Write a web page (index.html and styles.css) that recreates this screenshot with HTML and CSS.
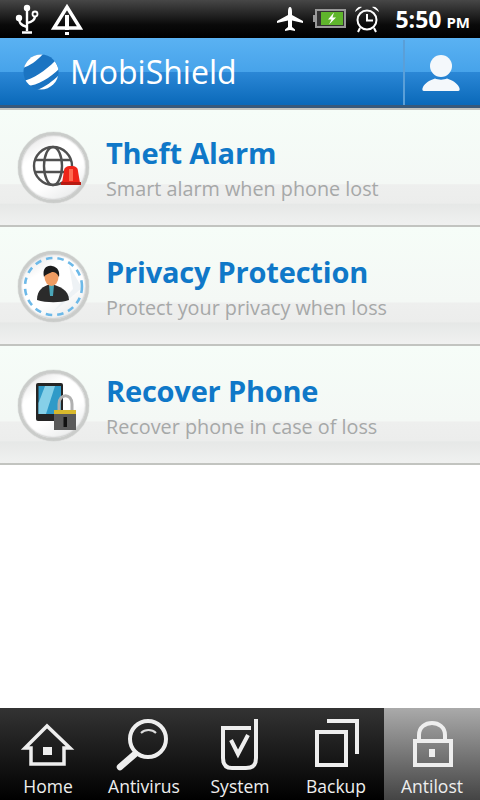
FILE: index.html
```html
<!DOCTYPE html>
<html lang="en">
<head>
    <meta charset="UTF-8">
    <meta name="viewport" content="width=device-width, initial-scale=1.0">
    <title>MobiShield</title>
    <link rel="stylesheet" href="styles.css">
</head>
<body>
<div class="phone">

    <div class="status-bar">
        <svg class="st-usb" viewBox="0 0 24 30" width="24" height="30">
            <g fill="none" stroke="#fff" stroke-width="2.400">
                <path d="M12 5V27M7 28.500H17"/>
                <path d="M12 23C5 21 4 18 4 14"/>
                <path d="M12 19C18 18 20 16 20 12"/>
            </g>
            <circle cx="12" cy="4" r="3.200" fill="#fff"/>
            <circle cx="4" cy="14" r="3.200" fill="#fff"/>
            <circle cx="20" cy="10" r="2.500" fill="none" stroke="#fff" stroke-width="1.800"/>
        </svg>
        <svg class="st-warn" viewBox="0 0 32 32" width="32" height="32">
            <path d="M16 4L29 25H3Z" fill="none" stroke="#fff" stroke-width="3.400"/>
            <rect x="14" y="12" width="4" height="15" fill="#fff"/>
            <rect x="14" y="29" width="4" height="3" fill="#fff"/>
        </svg>
        <div class="status-right">
            <svg class="st-plane" viewBox="0 0 28 26" width="28" height="26">
                <path d="M14 1C15.500 1 16 3 16 6V9L27 15V17L16 14.500V21L19 23.500V25L14 24L9 25V23.500L12 21V14.500L1 17V15L12 9V6C12 3 12.500 1 14 1Z" fill="#fff"/>
            </svg>
            <svg class="st-batt" viewBox="0 0 34 20" width="34" height="20">
                <rect x="4" y="1" width="29" height="17" fill="#333" stroke="#999" stroke-width="2"/>
                <rect x="1" y="6" width="3" height="7" fill="#999"/>
                <rect x="9" y="3" width="22" height="13" fill="#5fb52c"/>
                <path d="M22 3.500L16 10.500H19.500L17 15.500L24 8.500H20.500Z" fill="#fff"/>
            </svg>
            <svg class="st-alarm" viewBox="0 0 26 28" width="26" height="28">
                <circle cx="13" cy="15" r="9.500" fill="none" stroke="#fff" stroke-width="2"/>
                <path d="M13 9V15.500H19" fill="none" stroke="#fff" stroke-width="2"/>
                <path d="M1 7C2 3 5 1 8 2ZM25 7C24 3 21 1 18 2Z" fill="#fff"/>
                <path d="M6 23L4 27M20 23L22 27" stroke="#fff" stroke-width="2"/>
            </svg>
            <div class="clock">5:50<span class="ampm">PM</span></div>
        </div>
    </div>

    <header class="title-bar">
        <div class="brand">
            <svg class="logo" viewBox="0 0 36 36" width="36" height="36">
                <defs>
                    <clipPath id="ball"><circle cx="18" cy="18" r="17.500"/></clipPath>
                </defs>
                <circle cx="18" cy="18" r="17.500" fill="#1b74c2"/>
                <g clip-path="url(#ball)" fill="#fff">
                    <path d="M0 14C6 12 14 7 20 0H6L0 8Z"/>
                    <path d="M0 27C10 25 22 17 32 7L36 15C28 23 14 32 4 32Z"/>
                    <path d="M14 36C22 33 30 27 36 21V30L26 37Z"/>
                </g>
            </svg>
            <h1>MobiShield</h1>
        </div>
        <div class="account">
            <svg viewBox="0 0 38 36" width="38" height="36">
                <circle cx="19" cy="11" r="11" fill="#f4f8fb"/>
                <path d="M2 36C0 36 0 34 1 32C3 28 8 25 13 23.500C16 25 22 25 25 23.500C30 25 35 28 37 32C38 34 38 36 36 36Z" fill="#f4f8fb"/>
            </svg>
        </div>
    </header>

    <main class="menu">
        <div class="menu-row">
            <div class="badge">
                <svg viewBox="0 0 65 65" width="65" height="65">
                    <g fill="none" stroke="#505050" stroke-width="2.400">
                        <circle cx="32" cy="31" r="19"/>
                        <ellipse cx="32" cy="31" rx="9" ry="19"/>
                        <path d="M14 25H50M14 37H50"/>
                    </g>
                    <path d="M43 36C43 33 45 31 50 31C55 31 57 33 57 36L59 48H41Z" fill="#ee2418"/>
                    <rect x="40" y="47" width="20" height="3" fill="#b81a12"/>
                    <rect x="48" y="34" width="4" height="12" fill="#ff6a50"/>
                </svg>
            </div>
            <div class="row-text">
                <div class="row-title">Theft Alarm</div>
                <div class="row-sub">Smart alarm when phone lost</div>
            </div>
        </div>
        <div class="menu-row">
            <div class="badge">
                <svg viewBox="0 0 65 65" width="65" height="65">
                    <path d="M48 11L61 34L30 60L52 35Z" fill="#eef2f5"/>
                    <circle cx="32.500" cy="32.500" r="28.500" fill="none" stroke="#6db9e8" stroke-width="2.600" stroke-dasharray="6.500 5"/>
                    <path d="M16 46C16 36 22 32 30 30C38 32 48 36 48 46C40 49 25 49 16 46Z" fill="#2b2b2b"/>
                    <path d="M28 31H33L32 42H29Z" fill="#4aa6b8"/>
                    <ellipse cx="30.500" cy="23" rx="7" ry="9" fill="#ef9c62"/>
                    <path d="M23 23C21 14 26 11 31 12C37 13 39 18 38 23C36 19 34 18 31 18C27 20 25 20 23 23Z" fill="#1c1c1c"/>
                </svg>
            </div>
            <div class="row-text">
                <div class="row-title">Privacy Protection</div>
                <div class="row-sub">Protect your privacy when loss</div>
            </div>
        </div>
        <div class="menu-row">
            <div class="badge">
                <svg viewBox="0 0 65 65" width="65" height="65">
                    <rect x="15" y="10" width="27" height="38" rx="2" fill="#252525"/>
                    <rect x="17.500" y="13" width="22.500" height="28" fill="#2f9ac8"/>
                    <path d="M24 13H34L25 41H17.500V30Z" fill="#86d0e8"/>
                    <path d="M38 38V31C38 20 51 20 51 31V38" fill="none" stroke="#b0b0b0" stroke-width="3"/>
                    <rect x="33" y="37" width="22" height="20" fill="#5a5a5a"/>
                    <rect x="33" y="37" width="22" height="4" fill="#d9b92c"/>
                    <rect x="42.500" y="44" width="3.500" height="10" fill="#111"/>
                </svg>
            </div>
            <div class="row-text">
                <div class="row-title">Recover Phone</div>
                <div class="row-sub">Recover phone in case of loss</div>
            </div>
        </div>
    </main>

    <nav class="tabs">
        <div class="tab">
            <svg viewBox="0 0 96 54" width="96" height="54">
                <path d="M25 30L47 8L70 30H64V46H31V30Z" fill="none" stroke="#eee" stroke-width="3.500"/>
                <rect x="43" y="29" width="9" height="8" fill="#eee"/>
            </svg>
            <span>Home</span>
        </div>
        <div class="tab">
            <svg viewBox="0 0 96 54" width="96" height="54">
                <circle cx="52" cy="21" r="18" fill="none" stroke="#eee" stroke-width="4"/>
                <path d="M39 36L24 49" stroke="#eee" stroke-width="6.500" stroke-linecap="round"/>
                <path d="M45 15C49 11 56 11 60 15" fill="none" stroke="#ddd" stroke-width="2"/>
            </svg>
            <span>Antivirus</span>
        </div>
        <div class="tab">
            <svg viewBox="0 0 96 54" width="96" height="54">
                <path d="M59 10H31V40C31 47 34 50 40 50H54C61 50 64 47 64 40V1" fill="none" stroke="#eee" stroke-width="4"/>
                <path d="M39 22L46 36L56 17" fill="none" stroke="#eee" stroke-width="4"/>
            </svg>
            <span>System</span>
        </div>
        <div class="tab">
            <svg viewBox="0 0 96 54" width="96" height="54">
                <rect x="29" y="14" width="29" height="33" fill="none" stroke="#eee" stroke-width="4"/>
                <path d="M39 3H69V36" fill="none" stroke="#eee" stroke-width="4"/>
            </svg>
            <span>Backup</span>
        </div>
        <div class="tab active">
            <svg viewBox="0 0 96 54" width="96" height="54">
                <rect x="31" y="23" width="36" height="24" fill="none" stroke="#eee" stroke-width="4"/>
                <path d="M35 22V17C35 1 61 1 61 17V22" fill="none" stroke="#eee" stroke-width="4"/>
                <rect x="45" y="31" width="6" height="8" fill="#eee"/>
            </svg>
            <span>Antilost</span>
        </div>
    </nav>

</div>
</body>
</html>
```

FILE: styles.css
```css
* {
    box-sizing: border-box;
}

html, body {
    height: 100%;
}

body {
    margin: 0;
    background: #fff;
    font-family: "Open Sans", "Noto Sans", sans-serif;
    overflow: hidden;
}

.phone {
    height: 800px;
    display: flex;
    flex-direction: column;
}

/* status bar */
.status-bar {
    height: 38px;
    flex: none;
    display: flex;
    align-items: center;
    padding-left: 15px;
    background: linear-gradient(#474747, #0a0a0a 65%, #000);
}

.st-warn {
    margin-left: 12px;
}

.status-right {
    margin-left: auto;
    display: flex;
    align-items: center;
    padding-right: 10px;
}

.st-batt {
    margin-left: 8px;
}

.st-alarm {
    margin-left: 8px;
}

.clock {
    margin-left: 15px;
    color: #fff;
    font-size: 23px;
    font-weight: 700;
    white-space: nowrap;
}

.ampm {
    margin-left: 5px;
    font-size: 15px;
}

/* title bar */
.title-bar {
    height: 70px;
    flex: none;
    display: flex;
    border-bottom: 3px solid #38597a;
    background: linear-gradient(#5ab2f3, #47a3ea 50%, #2b87d6 51%, #0a69b9);
}

.logo {
    filter: blur(0.4px);
}

.brand {
    flex: 1;
    display: flex;
    align-items: center;
    gap: 11px;
    padding-left: 23px;
}

h1 {
    margin: 0;
    color: #fff;
    font-size: 32px;
    font-weight: 400;
}

.account {
    width: 77px;
    display: flex;
    align-items: center;
    justify-content: center;
    padding-right: 3px;
    border-left: 2px solid #5a9fd8;
    margin-top: 2px;
}

.account svg {
    filter: blur(0.4px);
}

/* menu rows */
.menu {
    flex: 1;
    background: #fff;
}

.menu-row {
    height: 119px;
    display: flex;
    align-items: center;
    padding: 2px 0 0 18px;
    border-bottom: 2px solid #c2c4c0;
    background: linear-gradient(#f6fdf8, #f4f8f5 64%, #eeefee 65%, #ecedec 81%, #e6e8e7 82%, #f0f1f0);
}

.menu-row:first-child {
    padding-top: 0;
    border-top: 2px solid #c2c4c0;
}

.badge {
    width: 71px;
    height: 71px;
    flex: none;
    display: flex;
    align-items: center;
    justify-content: center;
    border-radius: 50%;
    border: 3px solid #caccca;
    background: linear-gradient(150deg, #dedede, #fff 30%, #fff 62%, #e2e4e4);
    box-shadow: inset 0 0 2px #999, 0 0 1px #999;
}

.badge svg {
    filter: blur(0.5px);
}

.row-text {
    margin-left: 17px;
    padding-top: 5px;
}

.row-title {
    color: #0f78c8;
    font-size: 29px;
    font-weight: 700;
    letter-spacing: -0.2px;
    line-height: 38px;
}

.row-sub {
    color: #a6a8a8;
    font-size: 19.800px;
    line-height: 34px;
}

/* bottom tabs */
.tabs {
    height: 92px;
    flex: none;
    display: flex;
    background: linear-gradient(#333, #000);
}

.tab {
    flex: 1;
    display: flex;
    flex-direction: column;
    align-items: center;
    justify-content: flex-end;
    color: #eee;
    font-size: 17.500px;
    line-height: 24px;
    padding-bottom: 2px;
}

.tab svg {
    margin-bottom: 2px;
    filter: blur(0.4px);
}

.tab.active {
    background: linear-gradient(#aaa, #444);
}
```
